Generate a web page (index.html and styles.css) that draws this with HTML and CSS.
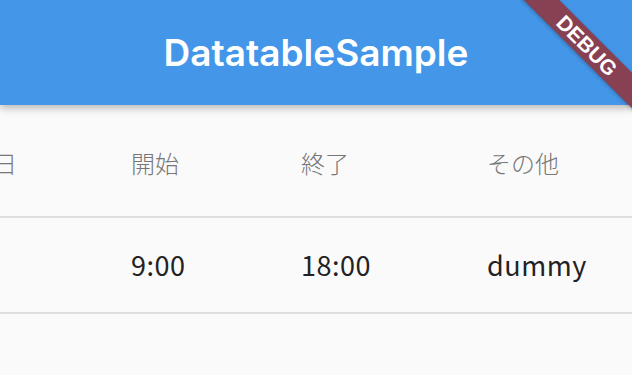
FILE: index.html
```html
<!DOCTYPE html>
<html lang="ja">
<head>
    <meta charset="UTF-8">
    <meta name="viewport" content="width=device-width, initial-scale=1">
    <title>DatatableSample</title>
    <link rel="stylesheet" href="styles.css">
</head>
<body>

    <div class="appbar">
        <h1 class="title">DatatableSample</h1>
    </div>

    <div class="table-wrap">
        <div class="table">
            <div class="row head">
                <div class="cell">曜日</div>
                <div class="cell">開始</div>
                <div class="cell">終了</div>
                <div class="cell">その他</div>
            </div>
            <div class="row data">
                <div class="cell">月</div>
                <div class="cell">9:00</div>
                <div class="cell">18:00</div>
                <div class="cell">dummy</div>
            </div>
        </div>
    </div>

    <!-- bandeau debug -->
    <div class="debug">DEBUG</div>

</body>
</html>
```

FILE: styles.css
```css
* {box-sizing: border-box}
html, body {height: 100%}
body {
    margin: 0;
    background-color: #fafafa;
    font-family: "Noto Sans CJK JP", "Noto Sans", sans-serif;
    overflow: hidden;
    position: relative;
}

/* ----- App bar ----- */

.appbar {
    position: relative;
    z-index: 1;
    height: 105px;
    background-color: #4496e8;
    box-shadow: 0 3px 8px rgba(0, 0, 0, 0.28);
    display: flex;
    justify-content: center;
    align-items: center;
}

.title {
    margin: 0;
    color: #fff;
    font-family: Inter, "Liberation Sans", sans-serif;
    font-weight: 600;
    font-size: 37px;
    line-height: 1;
}

/* ----- Table ----- */

.table-wrap {overflow: hidden}

.table {margin-left: -31px}

.row {
    display: grid;
    grid-template-columns: 48px 56px 72px auto;
    column-gap: 114px;
    align-items: center;
    border-bottom: 2px solid #dedede;
    white-space: nowrap;
}

.head {
    height: 113px;
    padding-top: 5px;
    color: #777;
    font-size: 24px;
    font-weight: 300;
}

.data {
    height: 96px;
    color: #222;
    font-size: 27px;
}

.data .cell {letter-spacing: 0.5px}

.cell {line-height: 1.2}

/* ----- Debug banner ----- */

.debug {
    position: absolute;
    z-index: 2;
    top: 33px;
    right: -65px;
    width: 220px;
    height: 25px;
    transform: rotate(45deg);
    background-color: #874152;
    color: #fff;
    font-family: "Liberation Sans", sans-serif;
    font-weight: bold;
    font-size: 21px;
    line-height: 25px;
    text-align: center;
    box-shadow: 0 1px 4px rgba(0, 0, 0, 0.3);
}
```
